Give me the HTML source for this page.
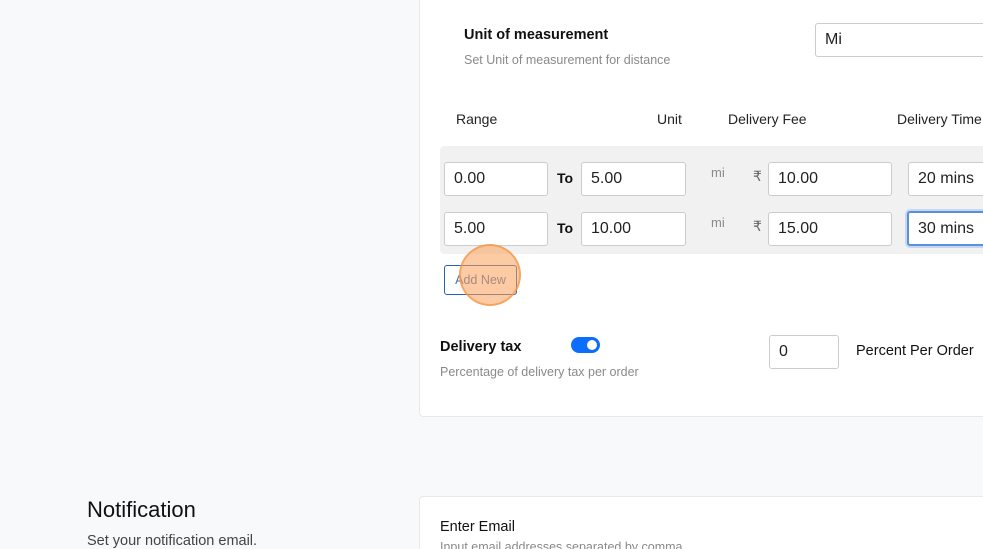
<!DOCTYPE html>
<html><head><meta charset="utf-8"><style>
*{box-sizing:border-box;margin:0;padding:0}
html,body{width:983px;height:549px;overflow:hidden}
body{background:#f8f9fa;font-family:"Liberation Sans",sans-serif;position:relative;color:#111}
.a{position:absolute;white-space:nowrap}
.card{position:absolute;background:#fff;border:1px solid #e8e9eb;border-radius:4px}
.in{position:absolute;background:#fff;border:1px solid #ccc;border-radius:3px;font-size:16px;color:#222;padding-left:9px;display:flex;align-items:center}
.sm{font-size:12px;color:#8a8a8a}
.b{font-weight:bold;font-size:14px}
.h{font-size:14px;color:#222}
</style></head><body>
<div class="card" style="left:419px;top:-10px;width:580px;height:427px"></div>
<div class="card" style="left:419px;top:496px;width:580px;height:60px"></div>

<div class="a b" style="left:464px;top:27px;font-size:14.5px">Unit of measurement</div>
<div class="a sm" style="left:464px;top:53px;font-size:12.5px">Set Unit of measurement for distance</div>
<div class="in" style="left:815px;top:23px;width:190px;height:34px">Mi</div>

<div class="a h" style="left:456px;top:111px">Range</div>
<div class="a h" style="left:657px;top:111px">Unit</div>
<div class="a h" style="left:728px;top:111px">Delivery Fee</div>
<div class="a h" style="left:897px;top:111px">Delivery Time</div>

<div class="a" style="left:440px;top:146px;width:560px;height:108px;background:#f1f1f1;border-radius:4px"></div>

<div class="in" style="left:444px;top:162px;width:104px;height:34px">0.00</div>
<div class="a b" style="left:557px;top:170px">To</div>
<div class="in" style="left:581px;top:162px;width:105px;height:34px">5.00</div>
<div class="a sm" style="left:711px;top:165px;font-size:13px">mi</div>
<div class="a" style="left:753px;top:168px;font-size:14px;color:#666">₹</div>
<div class="in" style="left:768px;top:162px;width:124px;height:34px">10.00</div>
<div class="in" style="left:908px;top:162px;width:100px;height:34px">20 mins</div>

<div class="in" style="left:444px;top:212px;width:104px;height:34px">5.00</div>
<div class="a b" style="left:557px;top:220px">To</div>
<div class="in" style="left:581px;top:212px;width:105px;height:34px">10.00</div>
<div class="a sm" style="left:711px;top:215px;font-size:13px">mi</div>
<div class="a" style="left:753px;top:218px;font-size:14px;color:#666">₹</div>
<div class="in" style="left:768px;top:212px;width:124px;height:34px">15.00</div>
<div class="in" style="left:907px;top:211px;width:100px;height:35px;border:2px solid #5b8fd6;box-shadow:0 0 0 2px #c5d8f3">30 mins</div>

<div class="a" style="left:444px;top:265px;width:73px;height:30px;border:1px solid #2a62b0;border-radius:3px;font-size:12.5px;color:#4a6fa8;display:flex;align-items:center;justify-content:center">Add New</div>
<div class="a" style="left:459px;top:244px;width:62px;height:62px;border-radius:50%;background:rgba(249,160,90,0.55);border:2px solid rgba(245,150,70,0.7)"></div>

<div class="a b" style="left:440px;top:339px;font-size:14.5px">Delivery tax</div>
<div class="a" style="left:571px;top:337px;width:29px;height:16px;border-radius:8px;background:#0d6efd"><div style="position:absolute;right:3px;top:3px;width:10px;height:10px;border-radius:50%;background:#fff"></div></div>
<div class="a sm" style="left:440px;top:365px;font-size:12.5px">Percentage of delivery tax per order</div>
<div class="in" style="left:769px;top:335px;width:70px;height:34px">0</div>
<div class="a" style="left:856px;top:343px;font-size:14.5px">Percent Per Order</div>

<div class="a" style="left:87px;top:497px;font-size:22px">Notification</div>
<div class="a" style="left:87px;top:533px;font-size:14.5px;color:#444">Set your notification email.</div>
<div class="a" style="left:440px;top:519px;font-size:14.5px">Enter Email</div>
<div class="a sm" style="left:440px;top:540px;font-size:12.5px">Input email addresses separated by comma</div>
</body></html>
